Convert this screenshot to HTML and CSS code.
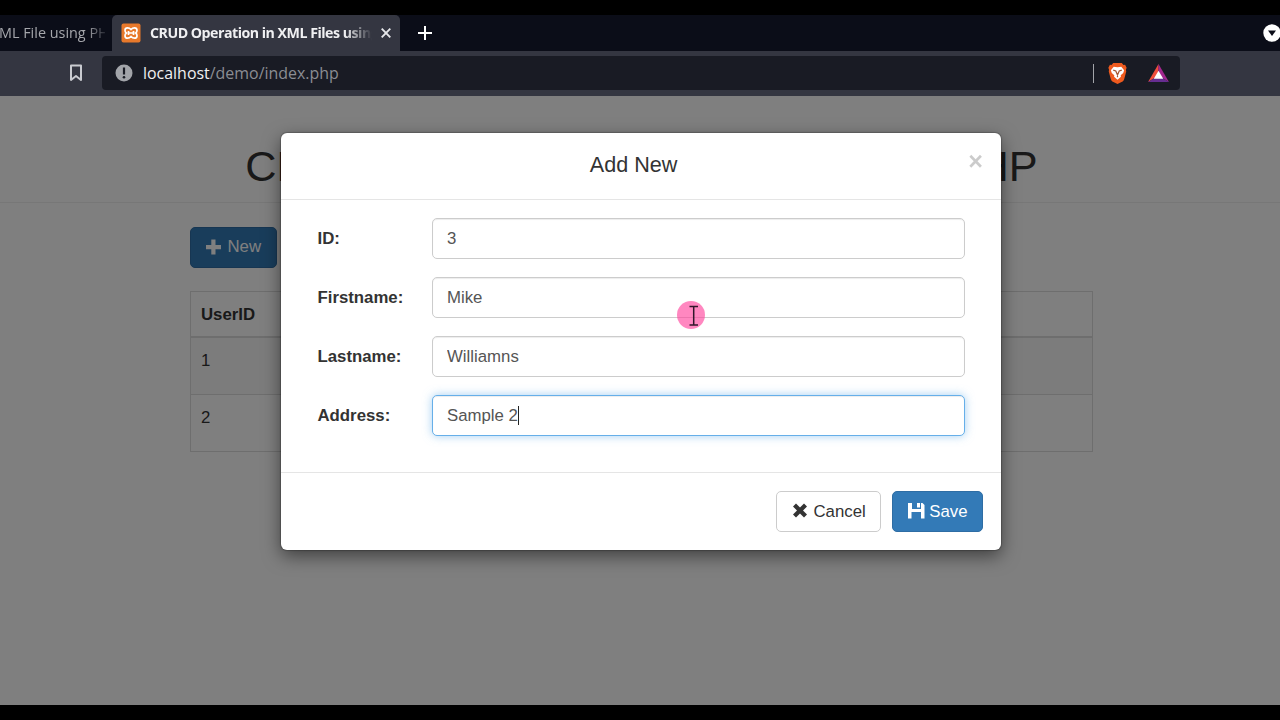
FILE: index.html
```html
<!DOCTYPE html>
<html lang="en">
<head>
    <meta charset="UTF-8">
    <meta name="viewport" content="width=device-width, initial-scale=1.0">
    <title>CRUD Operation in XML Files using PHP</title>
    <link rel="stylesheet" href="styles.css">
</head>
<body>
    <!-- Browser tabs -->
    <div class="tabs">
        <div class="tab tab-old"><span>ML File using PHP</span></div>
        <div class="tab tab-active">
            <svg class="favicon" width="20" height="20" viewBox="0 0 20 20">
                <rect x="0.5" y="0.5" width="19" height="19" rx="2" fill="#e8792b"/>
                <path d="M6.500 4.800Q8.500 4.800 10 6.500Q11.500 4.800 13.500 4.800Q16 4.800 16 7.300Q16 9 14.700 10Q16 11 16 12.700Q16 15.200 13.500 15.200Q11.500 15.200 10 13.500Q8.500 15.200 6.500 15.200Q4 15.200 4 12.700Q4 11 5.300 10Q4 9 4 7.300Q4 4.800 6.500 4.800zM7.500 8v4M12.500 8v4M7.500 10h5" fill="none" stroke="#fff" stroke-width="1.700"/>
            </svg>
            <span class="tab-title">CRUD Operation in XML Files using PHP</span>
            <svg class="tab-close" width="12" height="12" viewBox="0 0 12 12"><path d="M1.700 1.700l8.600 8.600M10.300 1.700l-8.600 8.600" stroke="#e6e7ea" stroke-width="1.900"/></svg>
        </div>
        <svg class="tab-plus" width="16" height="16" viewBox="0 0 16 16"><path d="M8 1v14M1 8h14" stroke="#fff" stroke-width="2"/></svg>
        <svg class="tab-menu" width="18" height="18" viewBox="0 0 18 18"><circle cx="9" cy="9" r="8.700" fill="#fff"/><path d="M5 6.500h8L9 12z" fill="#0b0d18"/></svg>
    </div>

    <!-- Address bar -->
    <div class="toolbar">
        <svg class="bookmark" width="14" height="18" viewBox="0 0 14 18"><path d="M2 1.500h10v14.500l-5-4-5 4z" fill="none" stroke="#c9cbd0" stroke-width="2" stroke-linejoin="round"/></svg>
        <div class="address">
            <svg width="18" height="18" viewBox="0 0 18 18"><circle cx="9" cy="9" r="8.500" fill="#a2a4a9"/><path d="M9 3.500v7" stroke="#191b24" stroke-width="2.200"/><circle cx="9" cy="13.300" r="1.300" fill="#191b24"/></svg>
            <span class="url"><b>localhost</b>/demo/index.php</span>
            <span class="divider"></span>
            <svg class="shield" width="19" height="21" viewBox="0 0 20 22">
                <path d="M5.500 0h9l1.800 2 1.700-.2L19.600 5l-.7 2 .3 2-2.200 8q-.4 1.500-1.600 2.300L10 22l-5.400-2.700Q3.400 18.500 3 17L.8 9l.3-2-.7-2L2 1.800l1.700.2z" fill="#ee5a1e"/>
                <path d="M6 4L10 4.500 14 4l3 3.500-1 3-2.600 2.300.2 1.700-3.600 3-3.600-3 .2-1.700L4 10.500l-1-3z" fill="#fff"/>
                <path d="M5.500 7.500l2.700.8L10 12.500l1.800-4.200 2.700-.8M10 12v3" fill="none" stroke="#a5542f" stroke-width="1.300"/>
            </svg>
            <svg class="rewards" width="21" height="19" viewBox="0 0 22 20">
                <path d="M11 0L0 19l11-7z" fill="#f04d3c"/>
                <path d="M11 0l11 19-11-7z" fill="#a3278f"/>
                <path d="M0 19h22l-11-7z" fill="#662d91"/>
                <path d="M11 7l5 8.500H6z" fill="#fff"/>
            </svg>
        </div>
    </div>

    <!-- Page content -->
    <div class="page">
        <h1 class="page-header">CRUD Operation in XML Files using PHP</h1>
        <div class="content">
            <button class="btn btn-primary" type="button">
                <svg width="17" height="17" viewBox="0 0 17 17"><path d="M6.300 .5h4.200v5.500H16v4.200h-5.500v5.300H6.300v-5.300H1V6h5.300z" fill="#fff"/></svg>
                New
            </button>
            <table class="table">
                <thead>
                    <tr><th>UserID</th><th></th></tr>
                </thead>
                <tbody>
                    <tr><td>1</td><td></td></tr>
                    <tr><td>2</td><td></td></tr>
                </tbody>
            </table>
        </div>

        <!-- Add New modal -->
        <div class="backdrop">
            <form class="modal">
                <div class="modal-header">
                    <h4>Add New</h4>
                    <button class="close" type="button">&times;</button>
                </div>
                <div class="modal-body">
                    <div class="form-row">
                        <label for="id">ID:</label>
                        <input type="text" id="id" name="id" value="3">
                    </div>
                    <div class="form-row">
                        <label for="firstname">Firstname:</label>
                        <input type="text" id="firstname" name="firstname" value="Mike">
                    </div>
                    <div class="form-row">
                        <label for="lastname">Lastname:</label>
                        <input type="text" id="lastname" name="lastname" value="Williamns">
                    </div>
                    <div class="form-row">
                        <label for="address">Address:</label>
                        <div class="input-focus" id="address">Sample 2<span class="caret"></span></div>
                    </div>
                </div>
                <div class="modal-footer">
                    <button class="btn btn-default" type="button">
                        <svg width="17" height="17" viewBox="0 0 17 17"><path d="M4 .5l4 4 4-4 3 3-4 4 4 4-3 3-4-4-4 4-3-3 4-4-4-4z" fill="#333"/></svg>
                        Cancel
                    </button>
                    <button class="btn btn-primary" type="submit">
                        <svg width="17" height="17" viewBox="0 0 17 17"><path d="M0 0h4v6h9V0h1.500L16.500 2v13.500h-3.500V9H3.500v6.500H0zM9 0h3v4.500H9z" fill="#fff"/></svg>
                        Save
                    </button>
                </div>
            </form>
        </div>
    </div>

    <!-- Mouse pointer -->
    <svg class="pointer" width="30" height="30" viewBox="0 0 30 30">
        <circle cx="15" cy="15" r="14" fill="#ff3d9a" fill-opacity="0.62"/>
        <path d="M13.500 6.500H22M17.700 6.500v18.500M13.500 25H22" fill="none" stroke="#30172a" stroke-width="1.500"/>
    </svg>
</body>
</html>
```
FILE: styles.css
```css
* {
    box-sizing: border-box;
}

body {
    margin: 0;
    width: 1280px;
    height: 720px;
    overflow: hidden;
    padding: 15px 0;
    display: flex;
    flex-direction: column;
    background-color: #000;
    color: #333;
    font-family: "Liberation Sans", Arial, sans-serif;
    font-size: 16.8px;
    line-height: 24px;
}

svg {
    flex-shrink: 0;
}

.tabs {
    height: 36px;
    flex-shrink: 0;
    display: flex;
    align-items: center;
    background-color: #0b0d18;
    font-family: "Open Sans", "Noto Sans", sans-serif;
    font-size: 14.4px;
}

.tab {
    height: 36px;
    display: flex;
    align-items: center;
    padding-bottom: 1px;
    white-space: nowrap;
}

.tab-old {
    width: 112px;
    color: #a6a7ac;
}

.tab-old span {
    width: 106px;
    margin-left: -1px;
    overflow: hidden;
    -webkit-mask-image: linear-gradient(to right, #000 88px, transparent 110px);
}

.tab-active {
    width: 288px;
    padding: 0 8px 0 9px;
    border-radius: 5px 5px 0 0;
    background-color: #343641;
    color: #f0f0f2;
    font-weight: bold;
}

.tab-title {
    width: 222px;
    margin: 0 8px 0 9px;
    padding-bottom: 1px;
    overflow: hidden;
    font-size: 14.2px;
    letter-spacing: -0.5px;
    -webkit-mask-image: linear-gradient(to right, #000 195px, transparent 222px);
}

.tab-plus {
    margin-left: 16.5px;
}

.tab-menu {
    margin-left: auto;
    margin-right: -1px;
}

.toolbar {
    height: 45px;
    flex-shrink: 0;
    display: flex;
    align-items: flex-start;
    padding-top: 5px;
    background-color: #343641;
}

.bookmark {
    margin: 8px 19.5px 0 68.5px;
}

.address {
    width: 1078px;
    height: 34px;
    display: flex;
    align-items: center;
    padding: 0 11px 0 12.5px;
    border-radius: 4px;
    background-color: #191b24;
}

.url {
    margin-left: 10.5px;
    color: #8b8d93;
    font-family: "Open Sans", "Noto Sans", sans-serif;
    font-size: 15.95px;
}

.url b {
    color: #f0f0f2;
    font-weight: normal;
}

.divider {
    width: 1px;
    height: 19px;
    margin-left: auto;
    background-color: #a2a4a9;
}

.shield {
    margin-left: 14px;
}

.rewards {
    margin-left: 21px;
}

.page {
    position: relative;
    flex: 1;
    overflow: hidden;
    background-color: #fff;
}

.page-header {
    margin: 0;
    height: 107px;
    padding-top: 46px;
    border-bottom: 1px solid #eee;
    font-size: 43.3px;
    font-weight: normal;
    line-height: 48px;
    text-align: center;
    text-indent: 3px;
    white-space: nowrap;
}

.content {
    width: 903px;
    margin: 23.5px 0 0 190px;
}

.btn {
    height: 41px;
    display: inline-flex;
    align-items: center;
    gap: 4.5px;
    padding: 0 14.5px;
    border: 1px solid #2e6da4;
    border-radius: 5px;
    font-family: inherit;
    font-size: 16.8px;
    line-height: 24px;
    white-space: nowrap;
}

.btn-primary {
    background-color: #337ab7;
    color: #fff;
}

.content .btn {
    gap: 5.5px;
    padding: 0 14.5px 0 14px;
}

.btn-default {
    padding: 0 14.5px 0 15px;
    border-color: #ccc;
    background-color: #fff;
    color: #333;
}

.table {
    width: 100%;
    margin-top: 23.5px;
    border-collapse: collapse;
}

.table th, .table td {
    padding: 11px 10px 9px;
    border: 1px solid #ddd;
    text-align: left;
    vertical-align: top;
}

.table th {
    height: 45px;
    border-bottom-width: 2px;
}

.table th:first-child {
    width: 180px;
}

.table td {
    height: 57px;
}

.table tbody tr:first-child {
    background-color: #f9f9f9;
}

/* Modal */
.backdrop {
    position: absolute;
    inset: 0;
    padding-top: 37px;
    background-color: rgba(0, 0, 0, 0.5);
}

.modal {
    width: 720px;
    height: 417px;
    margin-left: 281px;
    border-radius: 6px;
    background-color: #fff;
    box-shadow: 0 6px 18px rgba(0, 0, 0, 0.5), 0 0 1px 1px rgba(0, 0, 0, 0.2);
}

.modal-header {
    height: 67px;
    display: flex;
    align-items: flex-start;
    padding: 18px;
    border-bottom: 1px solid #e5e5e5;
}

.modal-header h4 {
    flex: 1;
    margin: 2px 0 0;
    font-size: 21.6px;
    font-weight: normal;
    text-align: center;
}

.close {
    margin-top: -1px;
    padding: 0;
    border: 0;
    background: none;
    color: #000;
    font-family: inherit;
    font-size: 25.2px;
    font-weight: bold;
    line-height: 22px;
    opacity: 0.2;
}

.modal-body {
    height: 272px;
    padding: 18px 36px 0 36.5px;
    display: flex;
    flex-direction: column;
    gap: 18px;
}

.form-row {
    display: flex;
    align-items: center;
}

.form-row label {
    width: 114px;
    font-weight: bold;
}

.form-row input, .input-focus {
    flex: 1;
    height: 41px;
    padding: 0 14.5px;
    border: 1px solid #ccc;
    border-radius: 5px;
    background-color: #fff;
    box-shadow: inset 0 1px 1px rgba(0, 0, 0, 0.075);
    color: #555;
    font-family: inherit;
    font-size: 16.8px;
}

.form-row .input-focus {
    display: flex;
    align-items: center;
    border-color: #66afe9;
    box-shadow: inset 0 1px 1px rgba(0, 0, 0, 0.075), 0 0 10px rgba(102, 175, 233, 0.6);
}

.caret {
    width: 1px;
    height: 19px;
    margin-left: 0.5px;
    background-color: #222;
}

.modal-footer {
    height: 77px;
    display: flex;
    justify-content: flex-end;
    align-items: flex-start;
    gap: 11px;
    padding: 18px;
    border-top: 1px solid #e5e5e5;
}

.pointer {
    position: absolute;
    left: 676px;
    top: 300px;
}
```
